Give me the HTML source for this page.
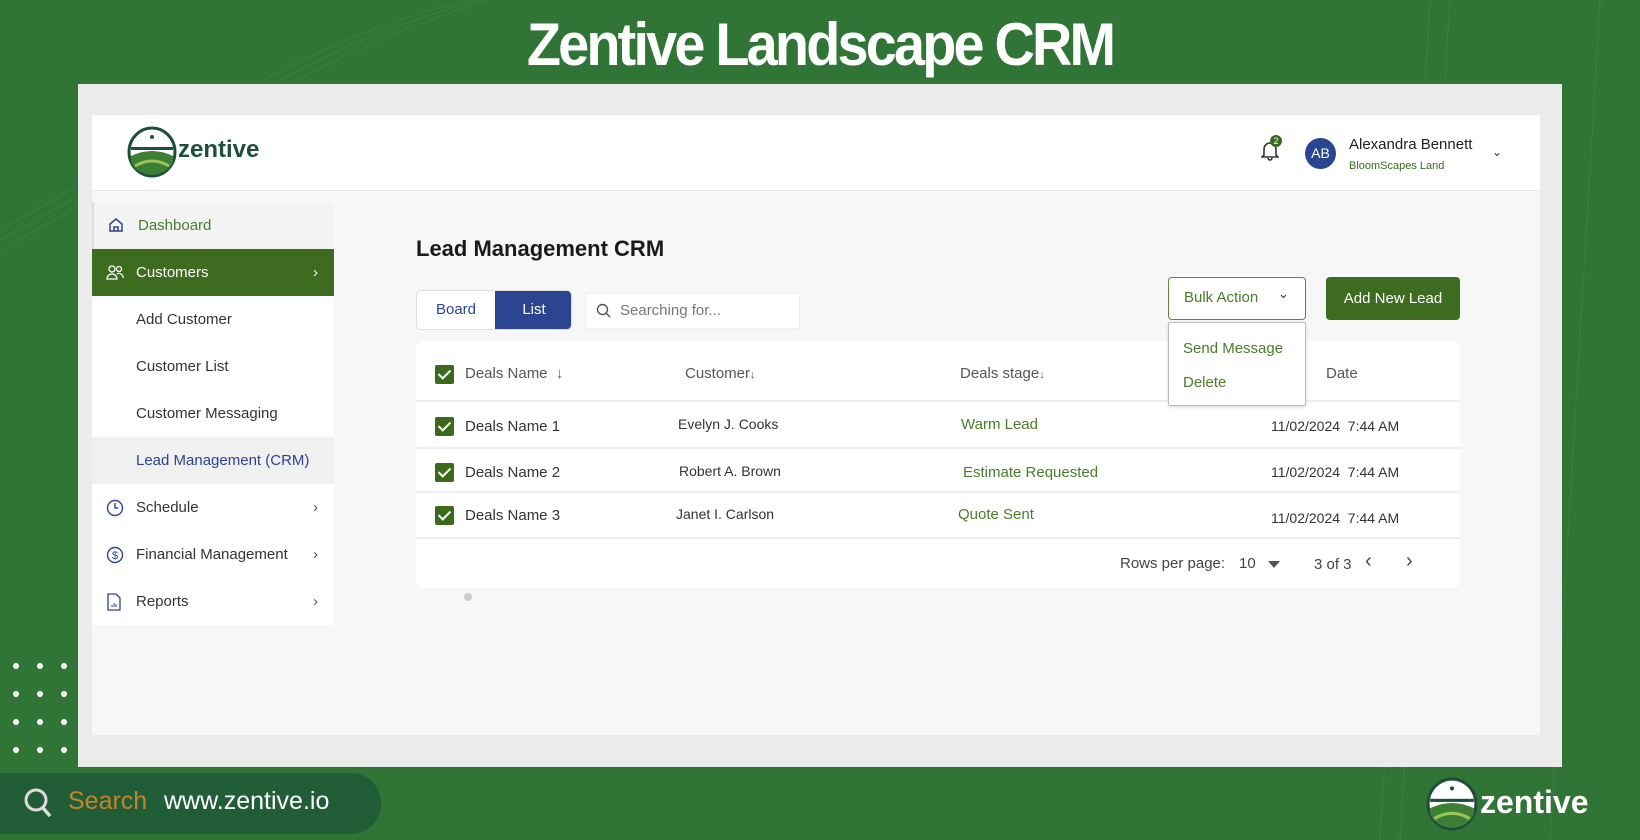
<!DOCTYPE html>
<html><head><meta charset="utf-8"><style>
*{margin:0;padding:0;box-sizing:border-box}
body{width:1640px;height:840px;overflow:hidden;background:#307536;font-family:"Liberation Sans",sans-serif;position:relative}
.a{position:absolute}
.t{white-space:nowrap}
.title{left:0;width:1640px;top:10px;text-align:center;color:#fff;font-weight:bold;font-size:60px;letter-spacing:-3px;transform:scaleX(0.93)}
.frame{left:78px;top:84px;width:1484px;height:683px;background:#ebebeb}
.app{left:92px;top:115px;width:1448px;height:620px;background:#f7f7f7}
.hdr{left:92px;top:115px;width:1448px;height:76px;background:#fff;border-bottom:1px solid #e6e6e6}
.side{left:92px;top:202px;width:242px}
.si{position:absolute;left:0;width:242px;height:47px;background:#fff;font-size:15px;color:#333;line-height:47px}
.si span{position:absolute;left:44px}
.ic{position:absolute;left:14px;top:15px}
.chev{position:absolute;right:16px;top:0;font-size:15px;color:#555}
.cb{position:absolute;width:19px;height:19px;background:#3b6a1c;border-radius:2px}
.cb:after{content:"";position:absolute;left:6px;top:2px;width:5px;height:10px;border:solid #fff;border-width:0 2.5px 2.5px 0;transform:rotate(45deg)}
.f14{font-size:15px;color:#333}
.g{color:#4a7d2a}
</style></head><body>
<svg class="a" style="left:0;top:0" width="1640" height="840">
<g fill="none" stroke="#fff" stroke-opacity=".06">
<path d="M0 230 C200 120 300 40 470 0"/><path d="M0 240 C210 125 310 45 480 0"/><path d="M0 250 C220 130 320 50 490 0"/>
<path d="M1430 0 L1380 840"/><path d="M1450 0 L1400 840"/><path d="M1600 0 L1550 840"/>
</g></svg>
<div class="a t title">Zentive Landscape CRM</div>
<div class="a frame"></div>
<div class="a app"></div>
<div class="a hdr"></div>
<svg class="a" style="left:127px;top:126px" width="50" height="52" viewBox="0 0 50 52">
<ellipse cx="25" cy="26" rx="23" ry="24" fill="#fff" stroke="#1f4f3a" stroke-width="3"/>
<path d="M4 30 Q25 20 46 30 L46 36 Q40 48 25 49 Q10 48 4 36Z" fill="#3e7f36"/>
<path d="M8 40 Q25 30 42 40" stroke="#9bc45b" stroke-width="3" fill="none"/>
<rect x="4" y="21" width="42" height="3" fill="#1f4f3a"/><circle cx="25" cy="11" r="2" fill="#1f4f3a"/>
</svg>
<div class="a t" style="left:178px;top:136px;font-size:24px;font-weight:bold;color:#1f4f3a">zentive</div>
<svg class="a" style="left:1261px;top:140px" width="18" height="22" viewBox="0 0 18 22"><path d="M3 15 V9 a6 6 0 0 1 12 0 V15 L17 17 H1Z M7 18 a2 2 0 0 0 4 0" fill="none" stroke="#333" stroke-width="1.6"/></svg>
<div class="a" style="left:1270px;top:135px;width:12px;height:12px;border-radius:6px;background:#3b6a1c;color:#fff;font-size:9px;text-align:center;line-height:12px">2</div>
<div class="a" style="left:1305px;top:138px;width:31px;height:31px;border-radius:16px;background:#2b4590;color:#fff;font-size:14px;text-align:center;line-height:31px">AB</div>
<div class="a t" style="left:1349px;top:136px;font-size:15px;color:#222">Alexandra Bennett</div>
<div class="a t" style="left:1349px;top:160px;font-size:11px;color:#3b6a1c">BloomScapes Land</div>
<div class="a t" style="left:1492px;top:145px;font-size:12px;color:#333">&#8964;</div>
<div class="a side">
<div class="si" style="top:0;background:#f3f3f3;border-left:2px solid #ddd"><svg class="ic" width="16" height="16" viewBox="0 0 16 16"><path d="M2 7 L8 2 L14 7 V14 H2Z M6 14 V10 H10 V14" fill="none" stroke="#2b4590" stroke-width="1.5"/></svg><span class="g">Dashboard</span></div>
<div class="si" style="top:47px;background:#3d6b1f;color:#fff"><svg class="ic" width="18" height="16" viewBox="0 0 18 16"><circle cx="6" cy="5" r="3" fill="none" stroke="#fff" stroke-width="1.3"/><circle cx="13" cy="5" r="2.5" fill="none" stroke="#fff" stroke-width="1.3"/><path d="M1 15 a5 5 0 0 1 10 0Z M11 10 a4 4 0 0 1 6 4" fill="none" stroke="#fff" stroke-width="1.3"/></svg><span>Customers</span><b class="chev" style="color:#fff;font-weight:normal">›</b></div>
<div class="si" style="top:94px"><span>Add Customer</span></div>
<div class="si" style="top:141px"><span>Customer List</span></div>
<div class="si" style="top:188px"><span>Customer Messaging</span></div>
<div class="si" style="top:235px;background:#f0f0f0"><span style="color:#2b4590">Lead Management (CRM)</span></div>
<div class="si" style="top:282px"><svg class="ic" width="18" height="18" viewBox="0 0 18 18"><circle cx="9" cy="9" r="7.5" fill="none" stroke="#2b4590" stroke-width="1.4"/><path d="M9 4 V9 H12" fill="none" stroke="#2b4590" stroke-width="1.4"/></svg><span>Schedule</span><b class="chev" style="font-weight:normal">›</b></div>
<div class="si" style="top:329px"><svg class="ic" width="18" height="18" viewBox="0 0 18 18"><circle cx="9" cy="9" r="7.5" fill="none" stroke="#2b4590" stroke-width="1.4"/><text x="9" y="13" font-size="11" text-anchor="middle" fill="#2b4590" font-family="Liberation Sans">$</text></svg><span>Financial Management</span><b class="chev" style="font-weight:normal">›</b></div>
<div class="si" style="top:376px"><svg class="ic" width="16" height="18" viewBox="0 0 16 18"><path d="M2 1 H10 L14 5 V17 H2Z" fill="none" stroke="#2b4590" stroke-width="1.3"/><path d="M6 14 V12 M8 14 V10 M10 14 V11" stroke="#2b4590"/></svg><span>Reports</span><b class="chev" style="font-weight:normal">›</b></div>
</div>
<div class="a t" style="left:416px;top:236px;font-size:22px;font-weight:bold;color:#1a1a1a">Lead Management CRM</div>
<div class="a" style="left:416px;top:290px;width:156px;height:40px;background:#fff;border:1px solid #ddd;border-radius:5px;overflow:hidden">
<div class="a t" style="left:0;top:0;width:78px;height:40px;line-height:38px;text-align:center;color:#2b4590;font-size:15px">Board</div>
<div class="a t" style="left:78px;top:-1px;width:78px;height:40px;line-height:40px;text-align:center;color:#fff;background:#2b4590;font-size:15px;border-radius:0 5px 5px 0">List</div></div>
<div class="a" style="left:585px;top:293px;width:215px;height:36px;background:#fff;border:1px solid #eee;border-radius:3px"></div>
<svg class="a" style="left:596px;top:303px" width="16" height="16" viewBox="0 0 16 16"><circle cx="6.5" cy="6.5" r="5" fill="none" stroke="#555" stroke-width="1.4"/><path d="M10 10 L14 14" stroke="#555" stroke-width="1.4"/></svg>
<div class="a t" style="left:620px;top:302px;font-size:15px;color:#777">Searching for...</div>
<div class="a" style="left:1168px;top:277px;width:138px;height:43px;background:#fff;border:1.5px solid #5a8a3a;border-radius:4px"></div>
<div class="a t g" style="left:1184px;top:289px;font-size:15px">Bulk Action</div>
<div class="a t g" style="left:1278px;top:286px;font-size:13px;color:#333">&#8964;</div>
<div class="a" style="left:1326px;top:277px;width:134px;height:43px;background:#3d6b1f;border-radius:4px;color:#fff;font-size:15px;text-align:center;line-height:43px">Add New Lead</div>
<div class="a" style="left:416px;top:341px;width:1044px;height:247px;background:#fff;border-radius:8px"></div>
<div class="a" style="left:416px;top:400px;width:1044px;height:2px;background:#eee"></div>
<div class="a" style="left:416px;top:447px;width:1044px;height:2px;background:#eee"></div>
<div class="a" style="left:416px;top:491px;width:1044px;height:2px;background:#eee"></div>
<div class="a" style="left:416px;top:537px;width:1044px;height:2px;background:#eee"></div>
<div class="cb" style="left:435px;top:365px"></div>
<div class="a t" style="left:465px;top:365px;font-size:15px;color:#555">Deals Name <span class="g">&nbsp;↓</span></div>
<div class="a t" style="left:685px;top:365px;font-size:15px;color:#555">Customer<span style="font-size:11px">↓</span></div>
<div class="a t" style="left:960px;top:365px;font-size:15px;color:#555">Deals stage<span style="font-size:11px">↓</span></div>
<div class="a t" style="left:1326px;top:365px;font-size:15px;color:#555">Date</div>
<div class="cb" style="left:435px;top:417px"></div><div class="a t f14" style="left:465px;top:418px">Deals Name 1</div><div class="a t f14" style="left:678px;top:416px;font-size:14px">Evelyn J. Cooks</div><div class="a t g" style="left:961px;top:416px;font-size:15px">Warm Lead</div><div class="a t f14" style="left:1271px;top:418px;font-size:14px">11/02/2024 &nbsp;7:44 AM</div>
<div class="cb" style="left:435px;top:463px"></div><div class="a t f14" style="left:465px;top:464px">Deals Name 2</div><div class="a t f14" style="left:679px;top:463px;font-size:14px">Robert A. Brown</div><div class="a t g" style="left:963px;top:464px;font-size:15px">Estimate Requested</div><div class="a t f14" style="left:1271px;top:464px;font-size:14px">11/02/2024 &nbsp;7:44 AM</div>
<div class="cb" style="left:435px;top:506px"></div><div class="a t f14" style="left:465px;top:507px">Deals Name 3</div><div class="a t f14" style="left:676px;top:506px;font-size:14px">Janet I. Carlson</div><div class="a t g" style="left:958px;top:506px;font-size:15px">Quote Sent</div><div class="a t f14" style="left:1271px;top:510px;font-size:14px">11/02/2024 &nbsp;7:44 AM</div>
<div class="a t f14" style="left:1120px;top:555px;color:#444">Rows per page:</div>
<div class="a t f14" style="left:1239px;top:555px;color:#444">10</div>
<div class="a" style="left:1268px;top:561px;width:0;height:0;border-left:6px solid transparent;border-right:6px solid transparent;border-top:7px solid #555"></div>
<div class="a t f14" style="left:1314px;top:556px;color:#444">3 of 3</div>
<div class="a t" style="left:1365px;top:550px;font-size:20px;color:#444">‹</div>
<div class="a t" style="left:1406px;top:550px;font-size:20px;color:#444">›</div>
<div class="a" style="left:464px;top:593px;width:8px;height:8px;border-radius:4px;background:#ccc"></div>
<div class="a" style="left:1168px;top:322px;width:138px;height:84px;background:#fff;border:1px solid #bbb;border-radius:2px;box-shadow:0 1px 3px rgba(0,0,0,.15)"></div>
<div class="a t g" style="left:1183px;top:340px;font-size:15px">Send Message</div>
<div class="a t g" style="left:1183px;top:374px;font-size:15px">Delete</div>
<svg class="a" style="left:0;top:655px" width="80" height="110"><g fill="#fff"><circle cx="16" cy="11" r="3"/><circle cx="40" cy="11" r="3"/><circle cx="64" cy="11" r="3"/><circle cx="16" cy="39" r="3"/><circle cx="40" cy="39" r="3"/><circle cx="64" cy="39" r="3"/><circle cx="16" cy="67" r="3"/><circle cx="40" cy="67" r="3"/><circle cx="64" cy="67" r="3"/><circle cx="16" cy="95" r="3"/><circle cx="40" cy="95" r="3"/><circle cx="64" cy="95" r="3"/></g></svg>
<div class="a" style="left:0;top:773px;width:381px;height:61px;background:#215e38;border-radius:0 30px 30px 0"></div>
<svg class="a" style="left:23px;top:787px" width="30" height="32" viewBox="0 0 30 32"><circle cx="13" cy="13" r="10" fill="none" stroke="#ddd" stroke-width="3"/><path d="M20 21 L27 29" stroke="#ddd" stroke-width="3.5"/></svg>
<div class="a t" style="left:68px;top:787px;font-size:25px;color:#c5842a">Search</div>
<div class="a t" style="left:164px;top:787px;font-size:25px;color:#fff">www.zentive.io</div>
<svg class="a" style="left:1426px;top:776px" width="52" height="56" viewBox="0 0 50 52">
<ellipse cx="25" cy="26" rx="23" ry="24" fill="#fff" stroke="#1f4f3a" stroke-width="3"/>
<path d="M4 30 Q25 20 46 30 L46 36 Q40 48 25 49 Q10 48 4 36Z" fill="#3e7f36"/>
<path d="M8 40 Q25 30 42 40" stroke="#9bc45b" stroke-width="3" fill="none"/>
<rect x="4" y="21" width="42" height="3" fill="#1f4f3a"/><circle cx="25" cy="11" r="2" fill="#1f4f3a"/>
</svg>
<div class="a t" style="left:1480px;top:784px;font-size:32px;font-weight:bold;color:#fff">zentive</div>
</body></html>
